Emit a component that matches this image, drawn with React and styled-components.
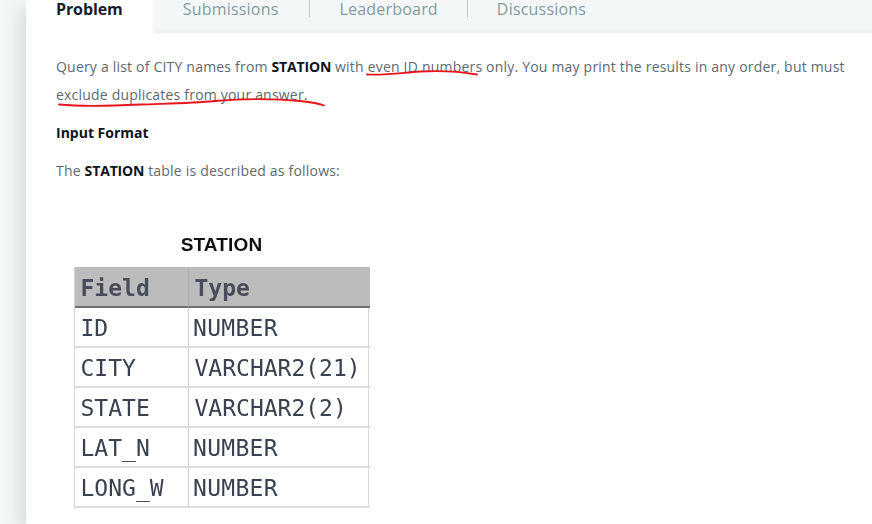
import React from "react"
import styled, {createGlobalStyle} from "styled-components"

const GlobalStyle=createGlobalStyle`
    html,body{
        margin:0;
        height:100%;
        overflow:hidden;
        background-color:#f3f7f7;
    }
`

const Page=styled.div`
    height:524px;
    padding-left:26px;
    overflow:hidden;
    font-family:"Open Sans",sans-serif;
`

const Card=styled.div`
    position:relative;
    width:846px;
    height:524px;
    background-color:#fff;
    box-shadow:-6px 8px 18px rgba(60,75,85,0.16);
`

const Tabs=styled.div`
    display:flex;
    height:33px;
    background:linear-gradient(#f3f7f7 85%,#e9eeee);
`

const Tab=styled.div`
    display:flex;
    align-items:flex-start;
    height:${p=>p.$active ? "33px" : "17px"};
    padding:0 ${p=>p.$right || 30}px 0 ${p=>p.$left || 30}px;
    font-size:16px;
    line-height:18px;
    letter-spacing:${p=>p.$active ? "-0.1px" : "0.2px"};
    font-weight:${p=>p.$active ? 700 : 400};
    color:${p=>p.$active ? "#1a1d29" : "#849a9f"};
    background-color:${p=>p.$active ? "#fff" : "transparent"};
    border-right:${p=>p.$divider ? "1px solid #bccacb" : "none"};
`

const Body=styled.div`
    padding:20px 0 0 30px;
    width:800px;
    font-size:14px;
    letter-spacing:0.2px;
    color:#5c6972;
`

const Para=styled.p`
    margin:0 0 ${p=>p.$gap || 10}px;
    line-height:${p=>p.$line || 28}px;
    strong{
        color:#0e141e;
        font-weight:700;
        letter-spacing:-0.15px;
    }
`

const Heading=styled.div`
    font-weight:700;
    letter-spacing:0;
    color:#0e141e;
    line-height:18px;
    margin-bottom:20px;
`

const Figure=styled.div`
    width:295px;
    margin:54px 0 0 17.5px;
    filter:blur(0.35px);
`

const Title=styled.div`
    font-family:"Liberation Sans",Arial,sans-serif;
    font-weight:700;
    font-size:19px;
    line-height:22px;
    letter-spacing:0.15px;
    text-align:center;
    color:#111;
    margin:0 0 11px 1px;
`

const Grid=styled.div`
    display:grid;
    grid-template-columns:114px 181px;
    border-left:1px solid #d6d6d6;
    border-right:1px solid #d6d6d6;
    box-sizing:border-box;
    font-family:"DejaVu Sans Mono",monospace;
    font-size:23px;
    letter-spacing:0;
    color:#3a4150;
`

const HeadCell=styled.div`
    height:41px;
    box-sizing:border-box;
    padding-left:6px;
    line-height:42px;
    font-weight:700;
    color:#494c5a;
    background-color:#bbbcbb;
    border-bottom:2px solid #6e7072;
    border-right:${p=>p.$last ? "none" : "1px solid #aeb0af"};
`

const Cell=styled.div`
    height:40px;
    box-sizing:border-box;
    padding-left:${p=>p.$pad}px;
    line-height:41px;
    letter-spacing:${p=>p.$spaced ? "0.3px" : "0"};
    white-space:nowrap;
    border-bottom:2px solid #dcdcdc;
    border-right:${p=>p.$last ? "none" : "1px solid #d2d2d2"};
`

const Scribble=styled.svg`
    position:absolute;
    left:-26px;
    top:0;
    pointer-events:none;
`

const rows=[
    ["ID","NUMBER",4.5],
    ["CITY","VARCHAR2(21)",6],
    ["STATE","VARCHAR2(2)",6],
    ["LAT_N","NUMBER",4.5],
    ["LONG_W","NUMBER",4.5],
]

const App=()=>{
    return(
        <Page>
            <GlobalStyle/>
            <Card>
                <Tabs>
                    <Tab $active>Problem</Tab>
                    <Tab $divider $right={31}>Submissions</Tab>
                    <Tab $divider $left={29} $right={29}>Leaderboard</Tab>
                    <Tab $left={29}>Discussions</Tab>
                </Tabs>
                <Body>
                    <Para $gap={15}>
                        Query a list of CITY names from <strong>STATION</strong> with even ID numbers only. You may print the results in any order, but must exclude duplicates from your answer.
                    </Para>
                    <Heading>Input Format</Heading>
                    <Para $line={18} $gap={0}>The <strong>STATION</strong> table is described as follows:</Para>
                    <Figure>
                        <Title>STATION</Title>
                        <Grid>
                            <HeadCell>Field</HeadCell>
                            <HeadCell $last>Type</HeadCell>
                            {rows.map(r=>(
                                <React.Fragment key={r[0]}>
                                    <Cell $pad={6}>{r[0]}</Cell>
                                    <Cell $pad={r[2]} $spaced={r[1]==="NUMBER"} $last>{r[1]}</Cell>
                                </React.Fragment>
                            ))}
                        </Grid>
                    </Figure>
                </Body>
                <Scribble width="872" height="120" viewBox="0 0 872 120" fill="none">
                    <path d="M367 74.5C385 75.5 400 73 420 71.5C440 70.5 460 71.5 477 74.5" stroke="#e8141c" strokeWidth="1.8" strokeLinecap="round"/>
                    <path d="M59 104.5C80 106.5 110 106 140 104.5C165 103.5 190 103.5 215 101C245 98.5 275 98.5 300 101C310 102 318 103 324 105.5" stroke="#e8141c" strokeWidth="1.8" strokeLinecap="round"/>
                </Scribble>
            </Card>
        </Page>
    )
}

export default App
